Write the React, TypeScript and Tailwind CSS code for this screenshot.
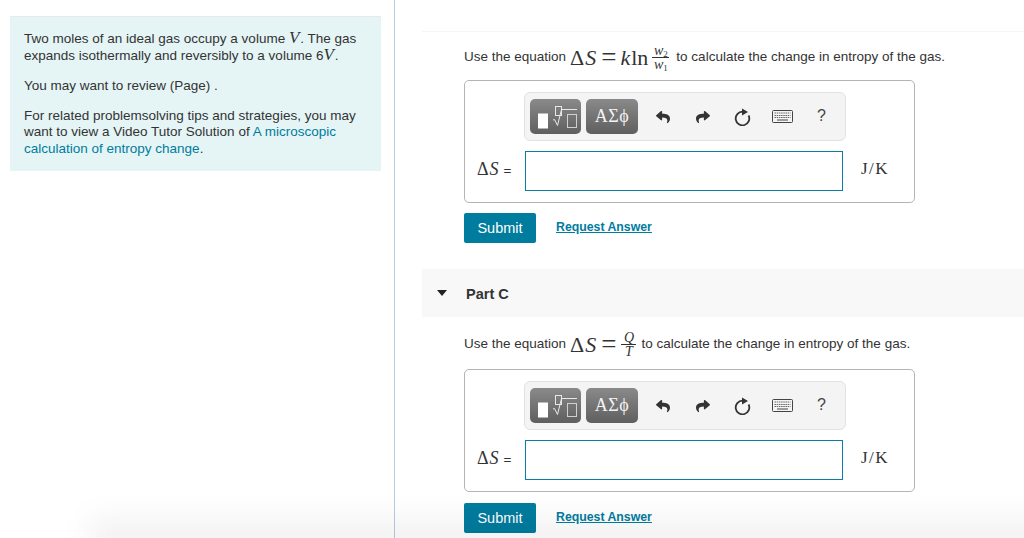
import { ReactNode } from 'react';
import { FaReply, FaShare } from 'react-icons/fa';

function MathVar({ children }: { children: ReactNode }) {
  return <span className="pr-[1px] font-['Liberation_Serif',serif] text-[17px] italic leading-[10px]">{children}</span>;
}

function Fraction({ top, bottom, className }: { top: ReactNode; bottom: ReactNode; className: string }) {
  return (
    <span className={`inline-flex flex-col items-center font-['Liberation_Serif',serif] text-[14px] italic leading-[13px] ${className}`}>
      <span className="w-full border-b border-[#333] text-center">{top}</span>
      <span className="w-full text-center">{bottom}</span>
    </span>
  );
}

function DeltaS() {
  return (
    <>
      <span className="ml-[4px] font-['Liberation_Serif',serif] text-[22px]">Δ<i className="ml-[1px]">S</i></span>
      <span className="ml-[5px] font-['Liberation_Serif',serif] text-[27px] leading-none">=</span>
    </>
  );
}

function Toolbar() {
  return (
    <div className="ml-[59px] flex h-[49px] w-[322px] items-center rounded-[6px] border border-[#e2e2e2] bg-[#f4f4f4] pl-[5px]">
      <div className="flex h-[35px] w-[51px] items-center rounded-[5px] bg-gradient-to-b from-[#8a8a8a] to-[#5f5f5f] pl-[7px]">
        <svg width="41" height="28" viewBox="0 0 41 28" fill="none">
          <rect x="1" y="10.500" width="10" height="15" fill="#fff" />
          <rect x="18.500" y="3.500" width="6" height="9" stroke="#e8e8e8" />
          <path d="M16 17l1.500-.500 3 6 4-16h15.500" stroke="#e8e8e8" />
          <rect x="30.500" y="11.500" width="9" height="13" stroke="#d0d0d0" />
        </svg>
      </div>
      <div className="ml-[5px] flex h-[35px] w-[52px] items-center justify-center rounded-[5px] bg-gradient-to-b from-[#8a8a8a] to-[#5f5f5f] font-['Liberation_Serif',serif] text-[18px] tracking-[0.5px] text-[#f2f2f2]">
        AΣϕ
      </div>
      <FaReply className="ml-[18px] h-[14px] w-[14px] text-[#333]" />
      <FaShare className="ml-[26px] h-[14px] w-[14px] text-[#333]" />
      <svg className="ml-[24px]" width="17" height="18" viewBox="0 0 17 18" fill="none">
        <path d="M8.500 3.700A6.800 6.800 0 1 0 14.600 7.500" stroke="#333" strokeWidth="1.800" />
        <path d="M8 0.500v7l6-3.500z" fill="#333" />
      </svg>
      <svg className="ml-[21px]" width="21" height="13" viewBox="0 0 21 13" fill="none">
        <rect x="0.500" y="0.500" width="20" height="12" rx="1" fill="#f4f4f4" stroke="#444" />
        <path d="M2.500 3h16M2.500 5.500h16M2.500 7.500h16" stroke="#666" strokeDasharray="1.500 0.700" />
        <path d="M5 10h11" stroke="#444" />
      </svg>
      <span className="mb-[2px] ml-[24px] font-['Liberation_Sans',sans-serif] text-[16px] text-[#444]">?</span>
    </div>
  );
}

function AnswerBox() {
  return (
    <div className="h-[123px] w-[451px] rounded-[5px] border border-[#b4b4b4] pt-[11px]">
      <Toolbar />
      <div className="mt-[10px] flex items-center">
        <span className="mb-[4px] ml-[12px] flex w-[48px] items-baseline text-[#333]">
          <span className="font-['Liberation_Serif',serif] text-[18px]">Δ<i className="ml-[1px]">S</i></span>
          <span className="ml-[5px] text-[13.500px]">=</span>
        </span>
        <div className="h-[40px] w-[318px] border border-[#0a7ea4]" />
        <span className="mb-[4px] ml-[18px] font-['Liberation_Serif',serif] text-[17px] tracking-[1.5px] text-[#333]">J/K</span>
      </div>
    </div>
  );
}

function Actions() {
  return (
    <div className="flex items-center">
      <button className="h-[30px] w-[72px] rounded-[2px] bg-[#007c9e] pt-[1px] text-[14.500px] text-white">Submit</button>
      <a className="mb-[2px] ml-[20px] text-[12.300px] font-bold text-[#007c9e] underline">Request Answer</a>
    </div>
  );
}

export default function App() {
  return (
    <div className="relative flex h-[538px] w-[1024px] overflow-hidden bg-white font-['Liberation_Sans',sans-serif] text-[#333]">
      {/* Left column */}
      <div className="h-full w-[395px] border-r border-[#b9cde0] pl-[10px] pt-[16px]">
        <div className="h-[155px] w-[371px] border-t border-[#e6eaea] bg-[#e5f5f6] pl-[14px] pt-[14px] text-[13.500px] leading-[16.500px]">
          <p className="w-[345px]">
            Two moles of an ideal gas occupy a volume <MathVar>V</MathVar>. The gas
            <br />
            expands isothermally and reversibly to a volume 6<MathVar>V</MathVar>.
          </p>
          <p className="mt-[13.500px]">You may want to review (Page) .</p>
          <p className="mt-[13.500px]">
            For related problemsolving tips and strategies, you may
            <br />
            want to view a Video Tutor Solution of <a className="text-[#007c9e]">A microscopic</a>
            <br />
            <a className="text-[#007c9e]">calculation of entropy change</a>.
          </p>
        </div>
      </div>

      {/* Right column */}
      <div className="flex-1 pl-[27px] pt-[31px]">
        <div className="border-t border-[#f6f6f6] pl-[42px]">
          <p className="mt-[8px] flex h-[32px] items-center pt-[2px] text-[13.500px]">
            Use the equation
            <DeltaS />
            <span className="ml-[4px] font-['Liberation_Serif',serif] text-[22px]"><i className="mr-[1px]">k</i>ln</span>
            <Fraction className="ml-[4px] mr-[7px] w-[17px]" top={<>w<sub className="text-[9px] not-italic">2</sub></>} bottom={<>w<sub className="text-[9px] not-italic">1</sub></>} />
            to calculate the change in entropy of the gas.
          </p>
          <div className="mt-[8px]">
            <AnswerBox />
          </div>
          <div className="mt-[10px]">
            <Actions />
          </div>
        </div>

        <div className="mt-[26px] flex h-[48px] items-center bg-[#f8f8f8] pl-[15px]">
          <span className="h-0 w-0 border-x-[5.500px] border-t-[6px] border-x-transparent border-t-[#222]" />
          <span className="ml-[19px] mt-[3px] text-[14.500px] font-bold">Part C</span>
        </div>

        <div className="pl-[42px]">
          <p className="mt-[10px] flex h-[32px] items-center pt-[2px] text-[13.500px]">
            Use the equation
            <DeltaS />
            <Fraction className="ml-[5px] mr-[5px] w-[15px]" top="Q" bottom="T" />
            to calculate the change in entropy of the gas.
          </p>
          <div className="mt-[10px]">
            <AnswerBox />
          </div>
          <div className="mt-[11px]">
            <Actions />
          </div>
        </div>
      </div>

      {/* Shadow along the bottom edge */}
      <div className="pointer-events-none absolute bottom-[-20px] left-[90px] right-[-40px] h-[40px] bg-black/5 blur-[14px]" />
    </div>
  );
}
